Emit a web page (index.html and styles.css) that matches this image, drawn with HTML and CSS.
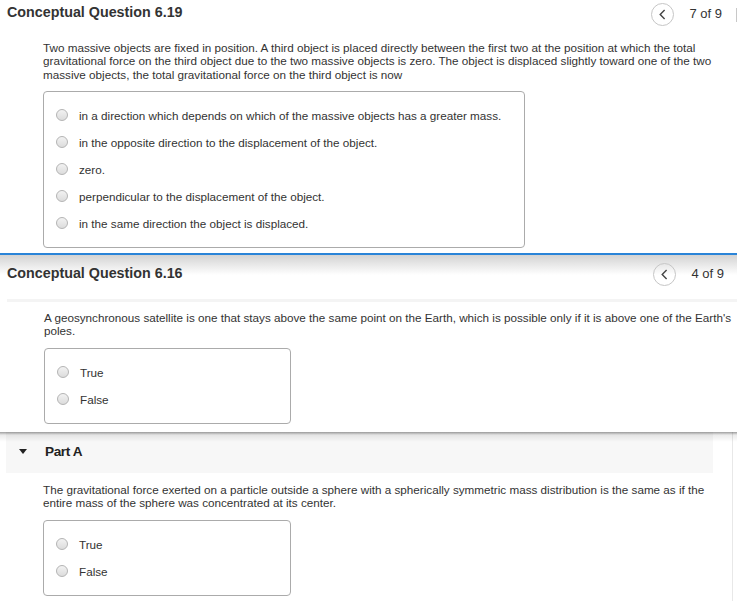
FILE: index.html
```html
<!DOCTYPE html>
<html lang="en">
<head>
    <meta charset="UTF-8">
    <meta name="viewport" content="width=device-width, initial-scale=1.0">
    <title>Conceptual Questions</title>
    <link rel="stylesheet" href="styles.css">
</head>
<body>
    <!-- question 7 of 9 -->
    <section class="shot shot-1">
        <div class="q-head">
            <h2 class="q-title">Conceptual Question 6.19</h2>
            <div class="pager">
                <span class="pager-prev">
                    <svg width="23" height="23" viewBox="0 0 23 23"><path d="M13.6 7 L9.2 11.5 L13.6 16" fill="none" stroke="#444" stroke-width="1.4"/></svg>
                </span>
                <span class="pager-count">7 of 9</span>
                <span class="pager-edge"></span>
            </div>
        </div>
        <div class="q-body">
            <p class="prompt">Two massive objects are fixed in position. A third object is placed directly between the first two at the position at which the total gravitational force on the third object due to the two massive objects is zero. The object is displaced slightly toward one of the two massive objects, the total gravitational force on the third object is now</p>
            <ul class="choices choices-wide">
                <li><span class="radio"></span>in a direction which depends on which of the massive objects has a greater mass.</li>
                <li><span class="radio"></span>in the opposite direction to the displacement of the object.</li>
                <li><span class="radio"></span>zero.</li>
                <li><span class="radio"></span>perpendicular to the displacement of the object.</li>
                <li><span class="radio"></span>in the same direction the object is displaced.</li>
            </ul>
        </div>
    </section>

    <!-- question 4 of 9 -->
    <section class="shot shot-2">
        <div class="q-head">
            <h2 class="q-title">Conceptual Question 6.16</h2>
            <div class="pager">
                <span class="pager-prev">
                    <svg width="23" height="23" viewBox="0 0 23 23"><path d="M13.6 7 L9.2 11.5 L13.6 16" fill="none" stroke="#444" stroke-width="1.4"/></svg>
                </span>
                <span class="pager-count">4 of 9</span>
            </div>
        </div>
        <div class="q-band"></div>
        <div class="q-body">
            <p class="prompt">A geosynchronous satellite is one that stays above the same point on the Earth, which is possible only if it is above one of the Earth's poles.</p>
            <ul class="choices choices-narrow">
                <li><span class="radio"></span>True</li>
                <li><span class="radio"></span>False</li>
            </ul>
        </div>
    </section>

    <!-- part A -->
    <section class="shot shot-3">
        <div class="part">
            <div class="part-head">
                <span class="caret"></span>
                <h3 class="part-title">Part A</h3>
            </div>
            <div class="q-body">
                <p class="prompt">The gravitational force exerted on a particle outside a sphere with a spherically symmetric mass distribution is the same as if the entire mass of the sphere was concentrated at its center.</p>
                <ul class="choices choices-narrow">
                    <li><span class="radio"></span>True</li>
                    <li><span class="radio"></span>False</li>
                </ul>
            </div>
        </div>
    </section>
</body>
</html>
```

FILE: styles.css
```css
* {
    box-sizing: border-box;
}
body {
    margin: 0;
    width: 737px;
    overflow: hidden;
    font-family: "Liberation Sans", Arial, sans-serif;
    color: #333;
    background: #fff;
}
.shot {
    position: relative;
    overflow: hidden;
}
.shot-1 {
    height: 253px;
}
.shot-2 {
    height: 179px;
    border-top: 2px solid #2a84d8;
    background: linear-gradient(#d3d3d3, #fff 20px);
}
.shot-3 {
    height: 169px;
}
.shot-3::before {
    content: "";
    position: absolute;
    top: 0;
    left: 0;
    right: 0;
    height: 10px;
    background: linear-gradient(rgba(0, 0, 0, 0.38), rgba(0, 0, 0, 0.08) 3px, rgba(0, 0, 0, 0) 10px);
    pointer-events: none;
}

/* question header */
.q-head {
    display: flex;
    justify-content: space-between;
    align-items: flex-start;
    padding-left: 7px;
}
.shot-1 .q-head {
    height: 26px;
}
.shot-2 .q-head {
    height: 44px;
}
.q-title {
    margin: 4px 0 0;
    font-size: 14.3px;
    line-height: 17px;
    font-weight: bold;
    color: #333;
}
.shot-2 .q-title {
    margin-top: 10px;
}
.pager {
    display: flex;
    align-items: center;
    margin-top: 3px;
    height: 23px;
}
.shot-2 .pager {
    margin-top: 8px;
    padding-right: 13px;
}
.pager-prev {
    width: 23px;
    height: 23px;
    border: 1px solid #c6c6c6;
    border-radius: 50%;
    display: flex;
    align-items: center;
    justify-content: center;
}
.pager-prev svg {
    display: block;
    flex: none;
}
.pager-count {
    margin-left: 15px;
    font-size: 13px;
    line-height: 23px;
    padding-bottom: 2px;
    color: #333;
}
.pager-edge {
    align-self: flex-start;
    margin: 5px 0 0 14px;
    width: 1px;
    height: 14px;
    background: #c8c8c8;
}
.q-band {
    height: 3px;
    margin-left: 7px;
    background: #f4f4f4;
}

/* question body */
.q-body {
    padding-left: 43px;
}
.shot-2 .q-body {
    padding-left: 44px;
}
.prompt {
    margin: 0;
    font-size: 11.7px;
    line-height: 13.3px;
    color: #333;
}
.shot-1 .prompt {
    margin-top: 15px;
}
.shot-2 .prompt {
    margin-top: 9px;
}
.shot-3 .prompt {
    margin-top: 10px;
}
.choices {
    list-style: none;
    margin: 10px 0 0;
    padding: 10px 0;
    border: 1px solid #ababab;
    border-radius: 4px;
}
.choices-wide {
    width: 482px;
}
.choices-narrow {
    width: 247px;
}
.shot-3 .choices-narrow {
    width: 248px;
}
.choices li {
    display: flex;
    align-items: center;
    height: 27px;
    font-size: 11.7px;
    color: #333;
    white-space: nowrap;
}
.radio {
    flex: none;
    width: 12px;
    height: 12px;
    margin: 0 11px 0 12px;
    border: 1px solid #b4b4b4;
    border-radius: 50%;
    background: linear-gradient(#f2f2f2, #dcdcdc);
}

/* part A */
.part {
    width: 733px;
    height: 169px;
    border-right: 1px solid #e8e8e8;
}
.part-head {
    display: flex;
    align-items: center;
    height: 41px;
    margin-left: 6px;
    width: 707px;
    padding: 0 0 2px 13px;
    background: #f7f7f7;
}
.caret {
    width: 0;
    height: 0;
    border-left: 4px solid transparent;
    border-right: 4px solid transparent;
    border-top: 5px solid #222;
    margin-right: 18px;
}
.part-title {
    margin: 0;
    font-size: 13.6px;
    line-height: 16px;
    font-weight: bold;
    letter-spacing: -0.4px;
    color: #222;
}
```
